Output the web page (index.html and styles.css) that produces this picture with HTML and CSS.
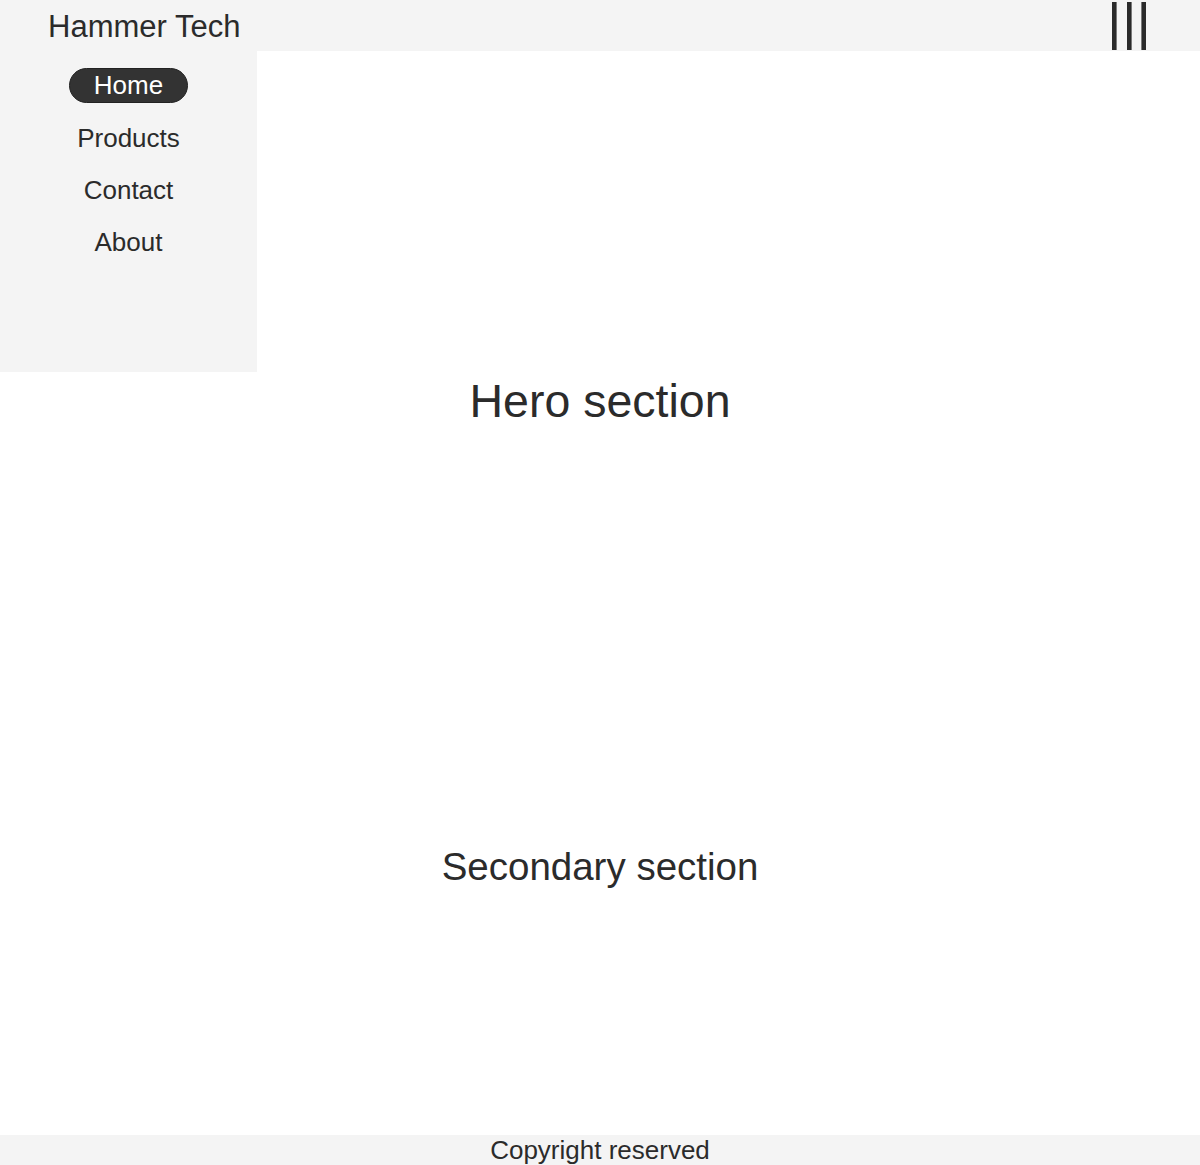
FILE: index.html
```html
<!DOCTYPE html>
<html lang="en">
<head>
<meta charset="utf-8">
<title>Hammer Tech</title>
<link rel="stylesheet" href="styles.css">
</head>
<body>
<header class="topbar">
  <div class="brand">Hammer Tech</div>
  <button class="menu-toggle" aria-label="Menu">
    <svg width="36" height="48" viewBox="0 0 36 48" aria-hidden="true">
      <rect x="0" y="0" width="4.6" height="48" fill="#2a2a2a"/>
      <rect x="15" y="0" width="4.6" height="48" fill="#2a2a2a"/>
      <rect x="29.4" y="0" width="4.6" height="48" fill="#2a2a2a"/>
    </svg>
  </button>
</header>
<nav class="sidebar">
  <ul class="nav-list">
    <li><a class="nav-link active" href="#">Home</a></li>
    <li><a class="nav-link" href="#">Products</a></li>
    <li><a class="nav-link" href="#">Contact</a></li>
    <li><a class="nav-link" href="#">About</a></li>
  </ul>
</nav>
<main>
  <section class="hero"><h1 class="hero-title">Hero section</h1></section>
  <section class="secondary"><h2 class="secondary-title">Secondary section</h2></section>
</main>
<footer class="footer">Copyright reserved</footer>
</body>
</html>
```

FILE: styles.css
```css
* { box-sizing: border-box; }
html, body { margin: 0; padding: 0; }
body {
  font-family: "Liberation Sans", Arial, Helvetica, sans-serif;
  color: #2b2b2b;
  background: #ffffff;
}
.topbar {
  height: 51px;
  background: #f4f4f4;
  display: flex;
  justify-content: space-between;
  align-items: flex-start;
  padding: 0 54px 0 48px;
}
.brand {
  font-size: 31px;
  line-height: 36px;
  padding-top: 9px;
}
.menu-toggle {
  border: 0;
  background: transparent;
  padding: 0;
  margin-top: 2px;
  width: 34px;
  height: 48px;
  display: block;
}
.menu-toggle svg { display: block; }
.sidebar {
  width: 257px;
  height: 321px;
  background: #f4f4f4;
  padding-top: 17px;
}
.nav-list {
  list-style: none;
  margin: 0;
  padding: 0;
  display: flex;
  flex-direction: column;
  align-items: center;
  gap: 17px;
}
.nav-link {
  display: block;
  font-size: 26px;
  line-height: 26px;
  height: 35px;
  padding: 4.5px 25px;
  color: #2b2b2b;
  text-decoration: none;
  border-radius: 18px;
}
.nav-link.active {
  background: #333333;
  color: #ffffff;
  border: 1px solid #222;
  padding: 3px 24px 0;
}
.hero {
  height: 469px;
  text-align: center;
  padding-top: 3px;
}
.hero-title {
  margin: 0;
  font-size: 46.5px;
  font-weight: normal;
  line-height: 52px;
}
.secondary {
  height: 294px;
  text-align: center;
  padding-top: 3px;
}
.secondary-title {
  margin: 0;
  font-size: 38.5px;
  font-weight: normal;
  line-height: 46px;
}
.footer {
  height: 30px;
  background: #f4f4f4;
  text-align: center;
  font-size: 26px;
  line-height: 25px;
  padding-top: 3px;
}
```
